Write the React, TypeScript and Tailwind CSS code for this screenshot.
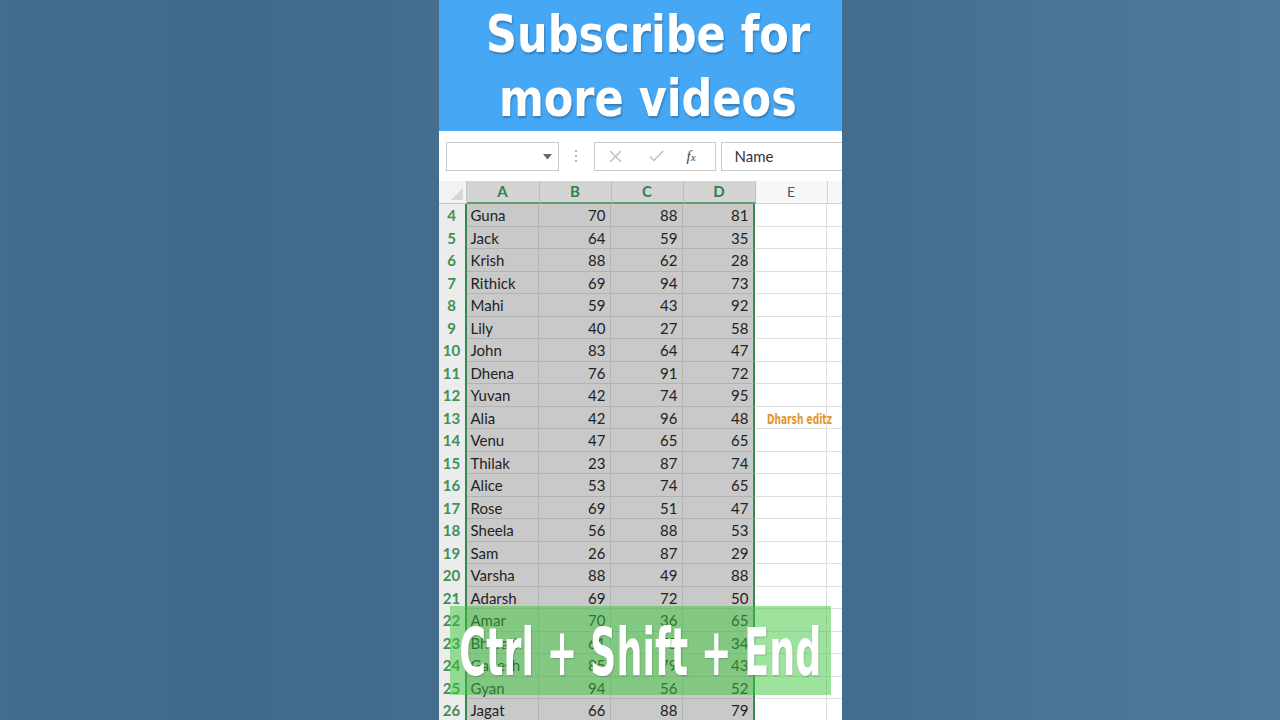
import React from 'react';

type Row = [number, string, number | string, number | string, number | string];

const ROWS: Row[] = [
  [4, 'Guna', 70, 88, 81],
  [5, 'Jack', 64, 59, 35],
  [6, 'Krish', 88, 62, 28],
  [7, 'Rithick', 69, 94, 73],
  [8, 'Mahi', 59, 43, 92],
  [9, 'Lily', 40, 27, 58],
  [10, 'John', 83, 64, 47],
  [11, 'Dhena', 76, 91, 72],
  [12, 'Yuvan', 42, 74, 95],
  [13, 'Alia', 42, 96, 48],
  [14, 'Venu', 47, 65, 65],
  [15, 'Thilak', 23, 87, 74],
  [16, 'Alice', 53, 74, 65],
  [17, 'Rose', 69, 51, 47],
  [18, 'Sheela', 56, 88, 53],
  [19, 'Sam', 26, 87, 29],
  [20, 'Varsha', 88, 49, 88],
  [21, 'Adarsh', 69, 72, 50],
  [22, 'Amar', 70, 36, 65],
  [23, 'Bharath', 61, 75, 34],
  [24, 'Ganesh', 85, 79, 43],
  [25, 'Gyan', 94, 56, 52],
  [26, 'Jagat', 66, 88, 79],
];

const CELL_FONT = { fontFamily: 'Lato, "Open Sans", sans-serif' };
const DISPLAY_FONT = { fontFamily: '"DejaVu Sans Condensed", "DejaVu Sans", sans-serif' };

function SelCell({ children, right, w }: { children: React.ReactNode; right?: boolean; w: string }) {
  return (
    <div
      className={`${w} shrink-0 border-r border-b border-[#b3b3b3] bg-[#c9c9c9] px-1 text-[15px] leading-[22px] text-[#222] ${
        right ? 'text-right' : 'text-left'
      }`}
    >
      {children}
    </div>
  );
}

function FormulaBar() {
  return (
    <div className="flex h-[50px] shrink-0 items-center bg-white pl-[7px]">
      <div className="relative h-[29px] w-[113px] border border-[#c9c9c9] bg-white">
        <svg className="absolute right-[6px] top-[11px]" width="9" height="6" viewBox="0 0 9 6">
          <path d="M0 0h9L4.5 5.5z" fill="#6b6b6b" />
        </svg>
      </div>
      <div className="flex w-[35px] flex-col items-center gap-[3px]">
        <span className="h-[2px] w-[2px] rounded-full bg-[#9b9b9b]" />
        <span className="h-[2px] w-[2px] rounded-full bg-[#9b9b9b]" />
        <span className="h-[2px] w-[2px] rounded-full bg-[#9b9b9b]" />
      </div>
      <div className="flex h-[29px] w-[122px] items-center border border-[#c9c9c9] bg-white">
        <svg className="ml-[14px]" width="13" height="13" viewBox="0 0 13 13">
          <path d="M1 1l11 11M12 1L1 12" stroke="#bdbdbd" strokeWidth="1.4" />
        </svg>
        <svg className="ml-[27px]" width="15" height="12" viewBox="0 0 15 12">
          <path d="M1 6.5l4 4L14 1" stroke="#bdbdbd" strokeWidth="1.5" fill="none" />
        </svg>
        <span
          className="ml-[23px] text-[15px] italic text-[#444]"
          style={{ fontFamily: '"Liberation Serif", serif' }}
        >
          f<span className="text-[11px]">x</span>
        </span>
      </div>
      <div
        className="ml-[5px] flex h-[29px] flex-1 items-center border border-r-0 border-[#c9c9c9] bg-white pl-[13px] text-[15px] text-[#333]"
        style={CELL_FONT}
      >
        Name
      </div>
    </div>
  );
}

function ColumnHeaders() {
  return (
    <div className="flex h-[23px] shrink-0" style={CELL_FONT}>
      <div className="relative w-[28px] shrink-0 border-r border-b border-[#c6c6c6] bg-[#f2f2f2]">
        <svg className="absolute bottom-[3px] right-[3px]" width="12" height="12" viewBox="0 0 12 12">
          <path d="M12 0v12H0z" fill="#d6d6d6" />
        </svg>
      </div>
      {['A', 'B', 'C', 'D'].map((c, i) => (
        <div
          key={c}
          className={`${i === 0 ? 'w-[73px]' : 'w-[72px]'} shrink-0 border-r border-b-2 border-r-[#bdbdbd] border-b-[#5f9e6e] bg-[#d4d4d4] text-center text-[15px] font-bold leading-[21px] text-[#2c8448]`}
        >
          {c}
        </div>
      ))}
      <div className="w-[72px] shrink-0 border-r border-b border-[#d4d4d4] bg-[#f7f7f7] text-center text-[14px] leading-[22px] text-[#555]">
        E
      </div>
      <div className="flex-1 border-b border-[#d4d4d4] bg-[#f7f7f7]" />
    </div>
  );
}

function DataRow({ row }: { row: Row }) {
  const [n, name, b, c, d] = row;
  return (
    <div className="flex h-[22.5px] shrink-0" style={CELL_FONT}>
      <div className="w-[28px] shrink-0 border-r-2 border-r-[#2f8a4d] bg-[#ececec] text-center text-[15px] font-bold leading-[22px] text-[#3f9155]">
        {n}
      </div>
      <SelCell w="w-[72px]">{name}</SelCell>
      <SelCell w="w-[72px]" right>
        {b}
      </SelCell>
      <SelCell w="w-[72px]" right>
        {c}
      </SelCell>
      <div className="w-[72px] shrink-0 border-r-2 border-b border-r-[#2f8a4d] border-b-[#b3b3b3] bg-[#c9c9c9] px-1 text-right text-[15px] leading-[22px] text-[#222]">
        {d}
      </div>
      <div className="relative w-[72px] shrink-0 border-r border-b border-[#dedede] bg-white">
        {n === 13 && (
          <span
            className="absolute left-[12px] top-[2px] origin-left scale-x-[0.72] whitespace-nowrap text-[14px] font-bold text-[#e4962c]"
            style={DISPLAY_FONT}
          >
            Dharsh editz
          </span>
        )}
      </div>
      <div className="flex-1 border-b border-[#dedede] bg-white" />
    </div>
  );
}

export default function App() {
  return (
    <div className="flex h-[720px] w-[1280px] overflow-hidden">
      <div className="flex-1 bg-gradient-to-r from-[#426d8f] via-[#3f6a8b] to-[#446d8e]" />
      <div className="relative flex w-[403px] shrink-0 flex-col overflow-hidden bg-white">
        <div className="flex h-[131px] shrink-0 flex-col items-center justify-center bg-[#46a7f5] pl-[16px] text-white">
          <div
            className="origin-center scale-x-[0.92] whitespace-nowrap text-[52px] font-bold leading-[64px] [text-shadow:1px_2px_2px_rgba(0,0,0,0.25)]"
            style={DISPLAY_FONT}
          >
            Subscribe for
          </div>
          <div
            className="origin-center scale-x-[0.92] whitespace-nowrap text-[52px] font-bold leading-[64px] [text-shadow:1px_2px_2px_rgba(0,0,0,0.25)]"
            style={DISPLAY_FONT}
          >
            more videos
          </div>
        </div>
        <FormulaBar />
        <ColumnHeaders />
        {ROWS.map((r) => (
          <DataRow key={r[0]} row={r} />
        ))}
        <div className="absolute left-[11px] top-[606px] flex h-[89px] w-[381px] items-center justify-center bg-[rgba(60,200,60,0.5)]">
          <span
            className="scale-x-[0.615] whitespace-nowrap pt-[4px] text-[66px] font-bold leading-none text-white [text-shadow:1px_1px_2px_rgba(0,0,0,0.2)]"
            style={DISPLAY_FONT}
          >
            Ctrl + Shift + End
          </span>
        </div>
      </div>
      <div className="flex-1 bg-gradient-to-r from-[#436c8e] via-[#4a7597] to-[#4f7899]" />
    </div>
  );
}
